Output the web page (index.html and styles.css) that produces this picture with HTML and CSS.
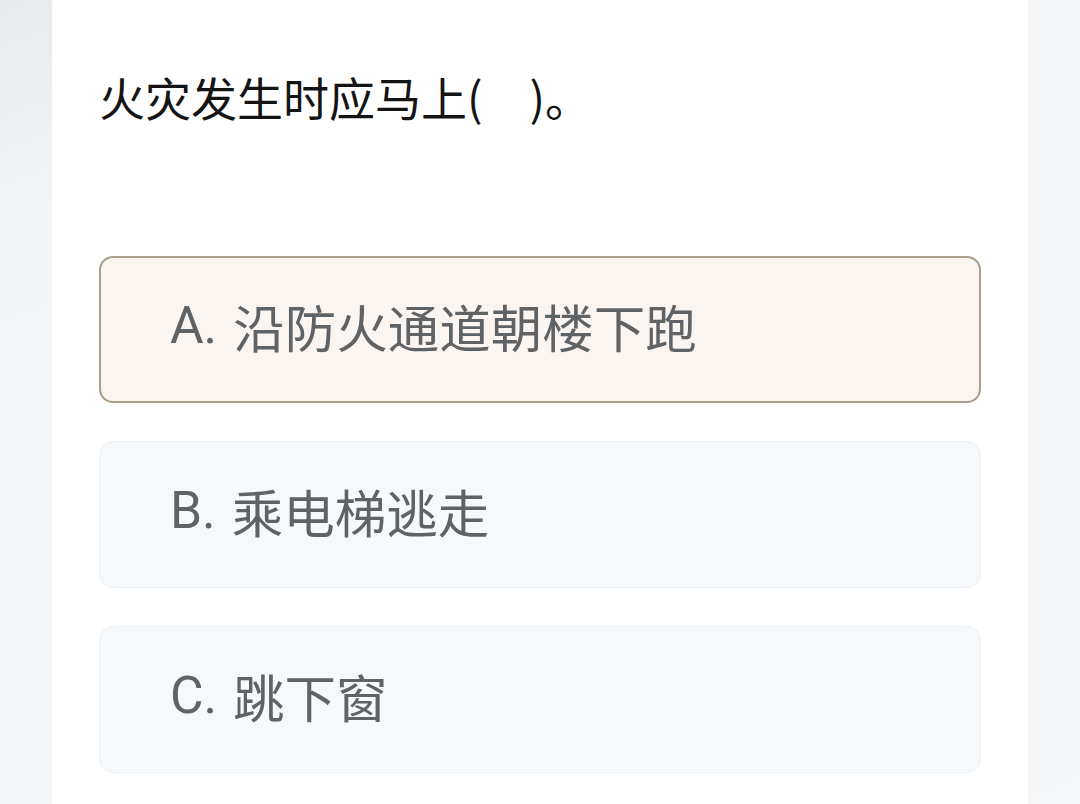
FILE: index.html
```html
<!DOCTYPE html>
<html lang="zh-CN">
	<head>
		<meta charset="UTF-8" />
		<meta name="viewport" content="width=device-width, initial-scale=1.0" />
		<title>答题</title>
		<link rel="stylesheet" href="styles.css">
	</head>
	<body>
		<div class="card">
			<h1 class="question">火灾发生时应马上(<span class="blank"></span>)。</h1>
			<div class="options">
				<div class="option selected"><span class="label">A.</span>沿防火通道朝楼下跑</div>
				<div class="option"><span class="label">B.</span>乘电梯逃走</div>
				<div class="option"><span class="label">C.</span>跳下窗</div>
			</div>
		</div>
	</body>
</html>
```

FILE: styles.css
```css
body {
	margin: 0;
	height: 804px;
	overflow: hidden;
	font-family: Roboto, "Noto Sans CJK SC", sans-serif;
	background: linear-gradient(160deg, #e8e9eb 0%, #f3f4f6 18%, #f5f6f8 100%);
}

.card {
	background-color: #fff;
	margin: 0 52px;
	height: 804px;
	padding: 59px 47px 0;
	box-sizing: border-box;
}

.question {
	margin: 0;
	font-family: "Noto Sans CJK SC", sans-serif;
	font-size: 46px;
	font-weight: 400;
	line-height: 74px;
	color: #141414;
}

.blank {
	display: inline-block;
	width: 47px;
}

.options {
	display: flex;
	flex-direction: column;
	gap: 38px;
	margin-top: 123px;
}

.option {
	height: 147px;
	box-sizing: border-box;
	display: flex;
	align-items: center;
	padding: 0 0 8px 70px;
	font-size: 51.5px;
	color: #606366;
	background-color: #f6f9fc;
	border: 1px solid #edf0f4;
	border-radius: 14px;
}

.option.selected {
	background-color: #fbf5f1;
	border: 2px solid #ab9d8c;
	padding-left: 69px;
}

.label {
	margin-right: 16px;
}
```
